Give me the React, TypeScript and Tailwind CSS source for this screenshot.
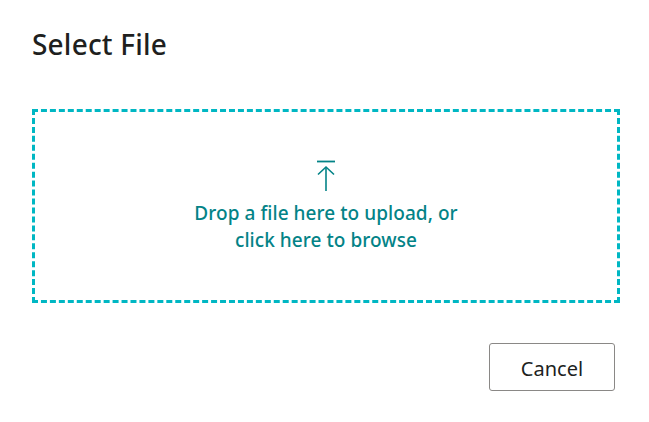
export default function App() {
  return (
    <div className="w-[649px] h-[422px] bg-white flex flex-col px-8 pt-[25px] font-['Noto_Sans','Open_Sans',sans-serif] overflow-hidden">
      <h1 className="text-[28px] leading-[38px] font-medium text-[#201f1e] tracking-[0.2px]">Select File</h1>
      <div className="mt-[46px] w-[588px] h-[194px] border-[3px] border-dashed border-[#00b7c3] flex flex-col items-center text-[#038387] pt-[48px]">
        <svg width="20" height="32" viewBox="0 0 20 32" fill="none" stroke="currentColor" strokeWidth="1.6" className="-ml-[1px]">
          <path d="M1 1.5H19" strokeWidth="1.8" />
          <path d="M10 31V7" />
          <path d="M2 14.5L10 7L18 14.5" />
        </svg>
        <div className="mt-[8px] text-[19px] leading-[27px] font-medium text-center tracking-[0.06px]">
          <div>Drop a file here to upload, or</div>
          <div>click here to browse</div>
        </div>
      </div>
      <div className="flex justify-end mt-[40px] pr-[2px]">
        <button className="w-[126px] h-[48px] pt-[3px] border border-[#8a8886] rounded-[3px] bg-white text-[20px] text-[#201f1e] font-normal">
          Cancel
        </button>
      </div>
    </div>
  );
}
